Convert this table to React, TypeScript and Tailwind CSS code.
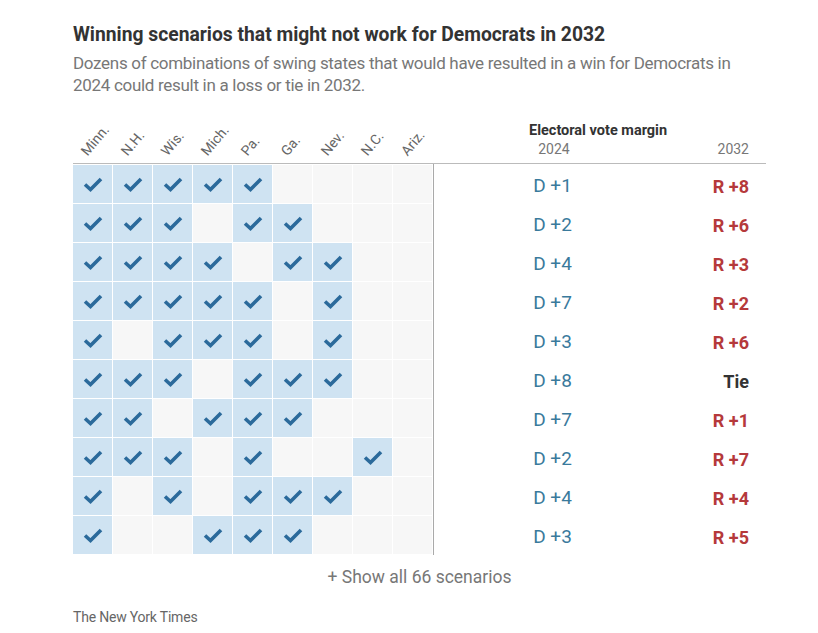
import React from 'react';

const states = ['Minn.', 'N.H.', 'Wis.', 'Mich.', 'Pa.', 'Ga.', 'Nev.', 'N.C.', 'Ariz.'];

interface Scenario {
  won: number[];
  d2024: string;
  r2032: string;
}

const scenarios: Scenario[] = [
  { won: [1, 1, 1, 1, 1, 0, 0, 0, 0], d2024: 'D +1', r2032: 'R +8' },
  { won: [1, 1, 1, 0, 1, 1, 0, 0, 0], d2024: 'D +2', r2032: 'R +6' },
  { won: [1, 1, 1, 1, 0, 1, 1, 0, 0], d2024: 'D +4', r2032: 'R +3' },
  { won: [1, 1, 1, 1, 1, 0, 1, 0, 0], d2024: 'D +7', r2032: 'R +2' },
  { won: [1, 0, 1, 1, 1, 0, 1, 0, 0], d2024: 'D +3', r2032: 'R +6' },
  { won: [1, 1, 1, 0, 1, 1, 1, 0, 0], d2024: 'D +8', r2032: 'Tie' },
  { won: [1, 1, 0, 1, 1, 1, 0, 0, 0], d2024: 'D +7', r2032: 'R +1' },
  { won: [1, 1, 1, 0, 1, 0, 0, 1, 0], d2024: 'D +2', r2032: 'R +7' },
  { won: [1, 0, 1, 0, 1, 1, 1, 0, 0], d2024: 'D +4', r2032: 'R +4' },
  { won: [1, 0, 0, 1, 1, 1, 0, 0, 0], d2024: 'D +3', r2032: 'R +5' },
];

function Check() {
  return (
    <svg width="20" height="16" viewBox="0 0 20 16">
      <path d="M2 8.5 L7.5 13.5 L18 3" fill="none" stroke="#2b6a9b" strokeWidth="3.6" strokeLinejoin="miter" />
    </svg>
  );
}

export default function App() {
  return (
    <div
      className="w-[818px] h-[633px] bg-white pl-[73px] pt-[22px]"
      style={{ fontFamily: 'Roboto, "Liberation Sans", sans-serif' }}
    >
      <div className="w-[693px]">
        {/* Title */}
        <h1 className="text-[19.3px] leading-[26px] font-bold text-[#333]">
          Winning scenarios that might not work for Democrats in 2032
        </h1>
        <p className="mt-[4px] text-[17px] leading-[22px] tracking-[-0.3px] text-[#777]">
          Dozens of combinations of swing states that would have resulted in a win for Democrats in
          <br />
          2024 could result in a loss or tie in 2032.
        </p>

        {/* Column headers */}
        <div className="mt-[12px] flex h-[55px]">
          <div className="flex">
            {states.map((s) => (
              <div key={s} className="relative w-[40px] h-full">
                <span className="absolute left-[16px] bottom-[5px] origin-bottom-left rotate-[-50deg] text-[14px] leading-none text-[#666] whitespace-nowrap">
                  {s}
                </span>
              </div>
            ))}
          </div>
          <div className="flex-1 flex flex-col justify-end pb-[5px]">
            <div className="pl-[96px] text-[14.5px] leading-[18px] font-bold text-[#333]">Electoral vote margin</div>
            <div className="flex text-[14px] leading-[18px] text-[#777]">
              <div className="w-[242px] text-center">2024</div>
              <div className="flex-1 text-right pr-[17px]">2032</div>
            </div>
          </div>
        </div>

        {/* Table */}
        <div className="flex border-t border-[#bbb]">
          <div className="flex flex-col gap-px pt-px border-r border-[#aaa] pr-px">
            {scenarios.map((r, i) => (
              <div key={i} className="flex gap-px">
                {r.won.map((w, j) => (
                  <div
                    key={j}
                    className={`w-[39px] h-[38px] flex items-center justify-center ${w ? 'bg-[#cfe3f2]' : 'bg-[#f7f7f7]'}`}
                  >
                    {w ? <Check /> : null}
                  </div>
                ))}
              </div>
            ))}
          </div>
          <div className="flex-1 flex flex-col gap-px pt-[2px]">
            {scenarios.map((r, i) => (
              <div key={i} className="flex h-[38px] items-center pt-[2px]">
                <div className="w-[237px] text-center text-[19px] text-[#3a7a9c]">{r.d2024}</div>
                <div className={`flex-1 text-right pr-[17px] text-[18px] font-bold ${r.r2032 === 'Tie' ? 'text-[#333]' : 'text-[#b5393b]'}`}>
                  {r.r2032}
                </div>
              </div>
            ))}
          </div>
        </div>

        <div className="mt-[10px] text-center text-[17.5px] leading-[24px] text-[#777]">+ Show all 66 scenarios</div>
        <div className="mt-[19px] text-[14px] leading-[18px] tracking-[-0.2px] text-[#666]">The New York Times</div>
      </div>
    </div>
  );
}
